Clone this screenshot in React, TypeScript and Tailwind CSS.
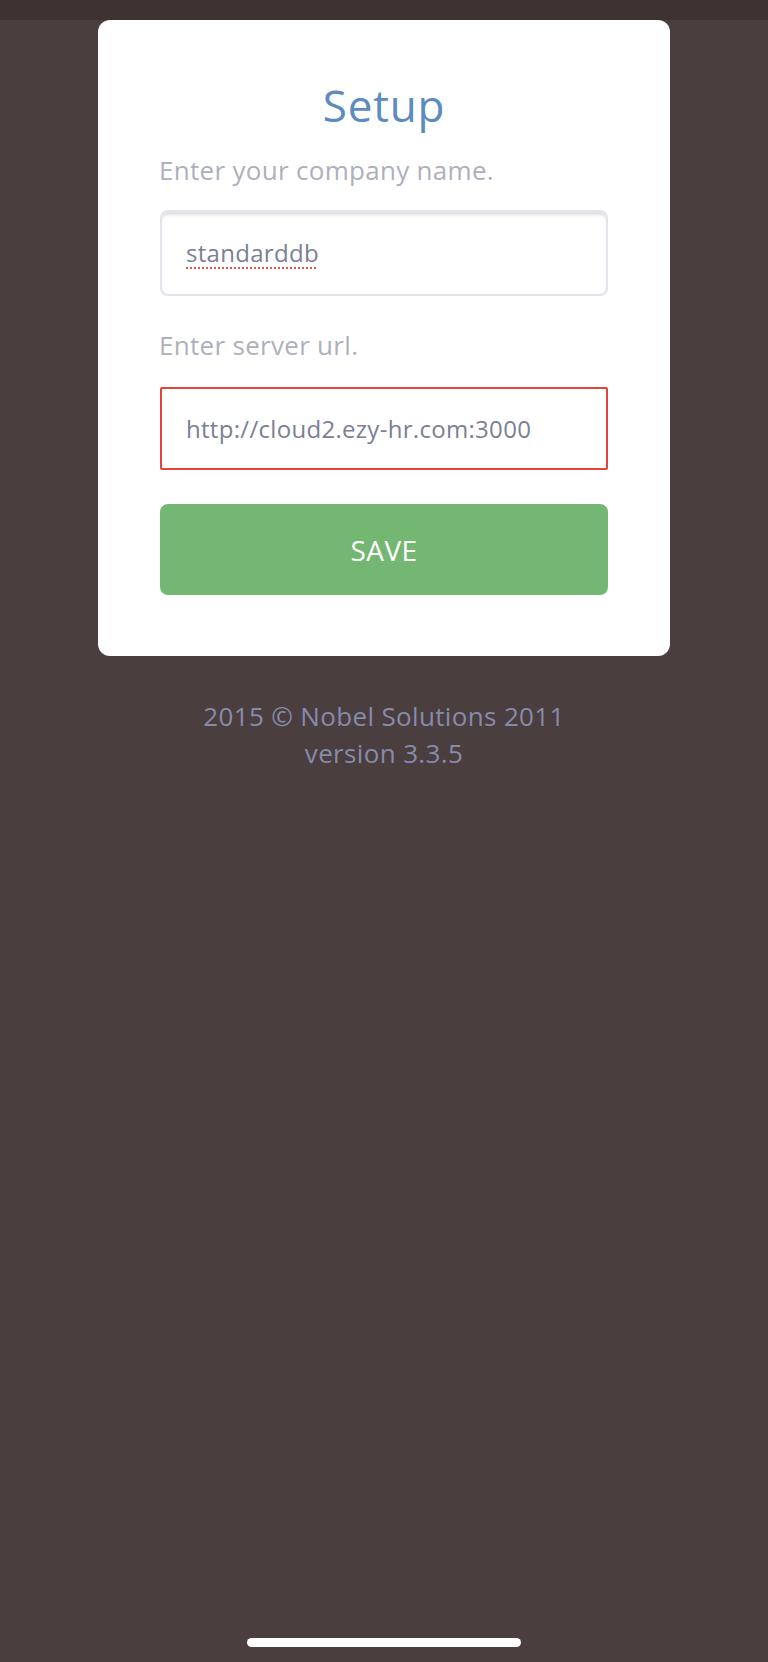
export default function App() {
  return (
    <div
      className="flex min-h-[1662px] flex-col items-center bg-[#4b3e3f]"
      style={{ fontFamily: '"Open Sans", "Noto Sans", sans-serif' }}
    >
      {/* status strip */}
      <div className="h-5 w-full bg-[#3f3233]" />

      <div className="w-[572px] rounded-[12px] bg-white px-[62px] pt-[55px] pb-[61px]">
        <h1 className="text-center text-[44px] leading-[60px] tracking-[0.8px] text-[#5b8bc0]">Setup</h1>

        <p className="mt-[17px] -ml-px text-[26px] leading-[36px] tracking-[0.3px] text-[#adb0bc]">
          Enter your company name.
        </p>
        <div className="mt-[22px] flex h-[86px] items-center rounded-lg border-2 border-[#e1e4ea] pl-[24px] shadow-[inset_0_4px_3px_-1px_rgba(0,0,0,0.13)]">
          <span className="text-[24px] tracking-[0.3px] text-[#7b8095] underline decoration-[#e5534b] decoration-dotted decoration-2 underline-offset-[5px]">
            standarddb
          </span>
        </div>

        <p className="mt-[31px] -ml-px text-[26px] leading-[36px] tracking-[0.3px] text-[#adb0bc]">Enter server url.</p>
        <div className="mt-[24px] flex h-[83px] items-center rounded-[2px] border-2 border-[#e6433e] pl-[24px]">
          <span className="text-[24px] tracking-[0.3px] text-[#7b8095]">http://cloud2.ezy-hr.com:3000</span>
        </div>

        <button
          type="button"
          className="mt-[34px] flex h-[91px] w-full items-center justify-center rounded-lg bg-[#74b772] text-[28px] tracking-[0.4px] text-white"
        >
          SAVE
        </button>
      </div>

      <div className="mt-[42px] text-center text-[26px] leading-[37px] tracking-[0.35px] text-[#868bab]">
        <p>2015 © Nobel Solutions 2011</p>
        <p>version 3.3.5</p>
      </div>

      <div className="flex-1" />
      <div className="mb-[15px] h-[9px] w-[274px] rounded-full bg-white" />
    </div>
  );
}
